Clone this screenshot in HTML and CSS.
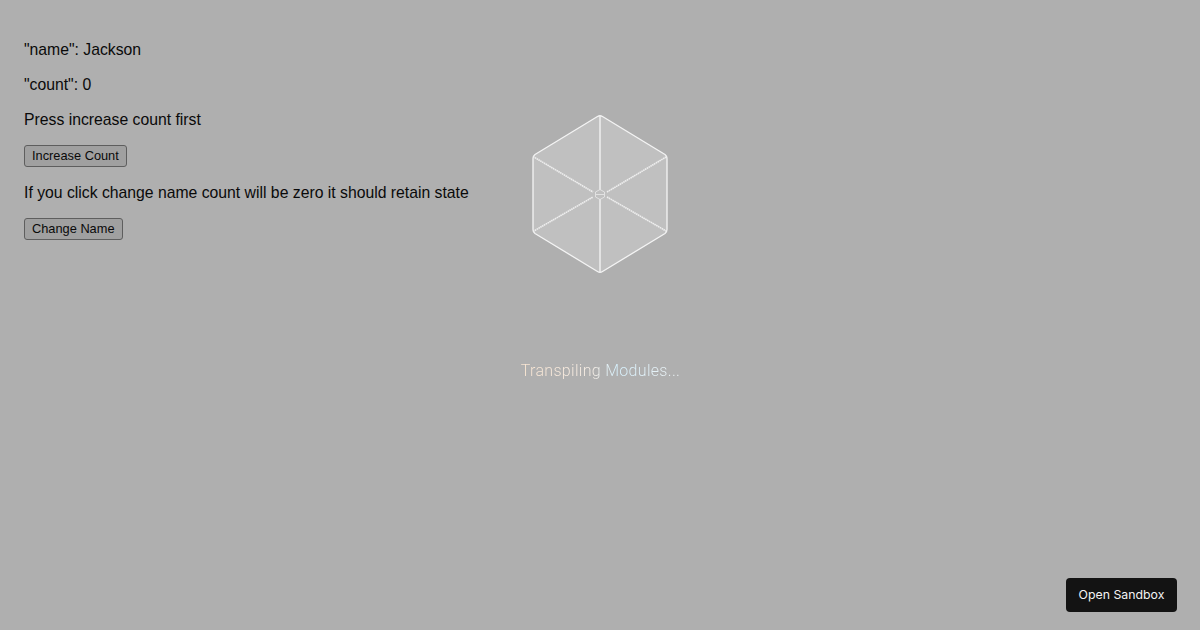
FILE: index.html
```html
<!DOCTYPE html>
<html lang="en">
<head>
<meta charset="UTF-8">
<title>Transpiling Modules</title>
<link rel="stylesheet" href="styles.css">
</head>
<body>

<div class="app">
  <p>"name": Jackson</p>
  <p>"count": 0</p>
  <p>Press increase count first</p>
  <button class="btn">Increase Count</button>
  <p>If you click change name count will be zero it should retain state</p>
  <button class="btn">Change Name</button>
</div>

<div class="loader">
  <svg class="cube" width="138" height="160" viewBox="0 0 138 160">
    <path class="face" d="M66.500 2.500 Q69 1 71.500 2.500 L134 40.500 Q136 42 136 44.500 V115.500 Q136 118 134 119.500 L71.500 157.500 Q69 159 66.500 157.500 L4 119.500 Q2 118 2 115.500 V44.500 Q2 42 4 40.500 Z"/>
    <path class="edge" d="M66.500 2.500 Q69 1 71.500 2.500 L134 40.500 Q136 42 136 44.500 V115.500 Q136 118 134 119.500 L71.500 157.500 Q69 159 66.500 157.500 L4 119.500 Q2 118 2 115.500 V44.500 Q2 42 4 40.500 Z"/>
    <path class="spoke" d="M69 1.500 V76 M69 85 V158.500"/>
    <path class="spoke thin" d="M2 42.500 L62 78 M76 78 L136 42.500 M2 117.500 L62 83 M76 83 L136 117.500"/>
    <path class="hub" d="M69 75.500 L73.500 78 V83 L69 85.500 L64.500 83 V78 Z M65 80.500 H73"/>
  </svg>
  <div class="loader-text">Transpiling Modules...</div>
</div>

<a class="open-sandbox">Open Sandbox</a>

</body>
</html>
```

FILE: styles.css
```css
html, body { height: 100%; }
body {
  margin: 8px;
  background-color: #afafaf;
  color: #0a0a0a;
  font-family: "Liberation Sans", Arial, sans-serif;
  font-size: 15.75px;
  overflow: hidden;
}
.app { padding: 16px; }
.app p { margin: 16px 0; line-height: 19px; }
.btn {
  display: block;
  height: 22px;
  padding: 0 7px 2px;
  background-color: #a0a0a0;
  border: 1px solid #5e5e5e;
  border-radius: 3px;
  color: #0a0a0a;
  font-family: "Liberation Sans", Arial, sans-serif;
  font-size: 12.800px;
}

/* loading overlay on top of the page */
.loader {
  position: absolute;
  top: 114px;
  left: 0;
  width: 100%;
  display: flex;
  flex-direction: column;
  align-items: center;
}
.cube { display: block; }
.face { fill: #c0c0c0; }
.edge { fill: none; stroke: #f4f4f4; stroke-width: 1.300; stroke-linejoin: round; }
.spoke { fill: none; stroke: #eeeeee; stroke-width: 1.500; }
.thin { stroke-dasharray: 1.600 0.500; stroke-width: 1.600; }
.hub { fill: none; stroke: #e4e4e4; stroke-width: 0.900; }
.loader-text {
  margin: 87px 0 0 1px;
  font-family: Roboto, "Liberation Sans", sans-serif;
  font-weight: 300;
  font-size: 16px;
  line-height: 20px;
  letter-spacing: 0.3px;
  background: linear-gradient(90deg, #fbe6d2 0%, #f6eee6 45%, #d6f0fc 60%, #eef2f4 100%);
  -webkit-background-clip: text;
  background-clip: text;
  color: transparent;
}

.open-sandbox {
  position: absolute;
  right: 23px;
  bottom: 18px;
  width: 111px;
  height: 34px;
  padding-bottom: 2px;
  box-sizing: border-box;
  display: flex;
  align-items: center;
  justify-content: center;
  background-color: #131313;
  border-radius: 4px;
  color: #f4f4f4;
  font-family: Inter, "Liberation Sans", sans-serif;
  font-size: 12.300px;
}
```
